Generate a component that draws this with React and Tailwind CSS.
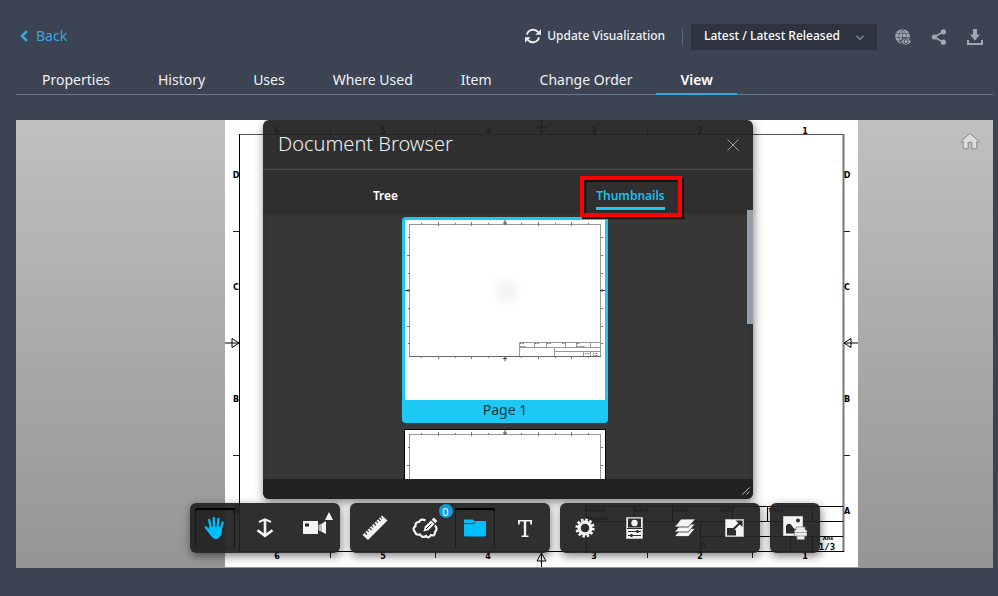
import React, { useState } from 'react';

const tabs = ['Properties', 'History', 'Uses', 'Where Used', 'Item', 'Change Order', 'View'];

const columns = [
    { label: '6', x: 52 },
    { label: '5', x: 158 },
    { label: '4', x: 263 },
    { label: '3', x: 369 },
    { label: '2', x: 475 },
    { label: '1', x: 580 },
];

const rows = [
    { label: 'D', y: 55 },
    { label: 'C', y: 167 },
    { label: 'B', y: 279 },
    { label: 'A', y: 391 },
];

const TopBar = () => (
    <header className="flex items-center justify-between pt-6 pr-[10px] pl-1">
        <a href="#back" className="flex items-center gap-2 pb-[2px] text-sm text-[#38a5dc]">
            <svg width="8" height="12" viewBox="0 0 8 12" fill="none" stroke="currentColor" strokeWidth="2.6">
                <path d="M7 1 L2 6 L7 11" />
            </svg>
            Back
        </a>

        <div className="flex items-center">
            <button className="flex items-center gap-[6px] pb-[2px] text-xs font-medium text-[#f0f1f3]">
                <svg width="16" height="16" viewBox="0 0 16 16" fill="none" stroke="currentColor" strokeWidth="2">
                    <path d="M2 6.6 A6.2 6.2 0 0 1 13 4.2" />
                    <path d="M14 9.4 A6.2 6.2 0 0 1 3 11.8" />
                    <path d="M16 1.2 V6.8 H10.4 Z" fill="currentColor" stroke="none" />
                    <path d="M0 14.8 V9.2 H5.6 Z" fill="currentColor" stroke="none" />
                </svg>
                Update Visualization
            </button>
            <span className="mr-2 ml-[17px] h-4 w-px bg-[#5f6b7a]" />
            <div className="relative">
                <select
                    aria-label="Version"
                    className="block h-[26px] w-[186px] appearance-none bg-[#2d333f] pb-[2px] pl-[13px] text-xs font-medium text-white"
                >
                    <option>Latest / Latest Released</option>
                </select>
                <svg
                    className="pointer-events-none absolute top-[11px] right-[13px] text-[#7d8998]"
                    width="8"
                    height="6"
                    viewBox="0 0 8 6"
                    fill="none"
                    stroke="currentColor"
                    strokeWidth="1.5"
                >
                    <path d="M0.5 0.8 L4 4.5 L7.5 0.8" />
                </svg>
            </div>
            <div className="ml-[18px] flex items-center gap-5 text-[#a2a8b2]">
                <button aria-label="Web view">
                    <svg width="16" height="16" viewBox="0 0 16 16">
                        <circle cx="7.5" cy="7.5" r="7.3" fill="currentColor" />
                        <path
                            d="M7.5 0 V15 M0 4.5 H15 M0 8.5 H15 M1 12 H14 M7.5 0.5 C2.5 4 2.5 11 7.5 14.5 M7.5 0.5 C12.5 4 12.5 11 7.5 14.5"
                            fill="none"
                            stroke="#3c4453"
                            strokeWidth="0.6"
                        />
                        <path d="M4.5 12.6 Q10.5 4.5 16 12.6 Q10.5 20 4.5 12.6" fill="#3c4453" />
                        <path d="M6 12.7 Q11 6.5 16 12.7 Q11 18.6 6 12.7" fill="currentColor" />
                        <circle cx="11" cy="12.6" r="2" fill="none" stroke="#3c4453" />
                    </svg>
                </button>
                <button aria-label="Share">
                    <svg width="16" height="16" viewBox="0 0 16 16" fill="currentColor">
                        <path d="M12.5 2.8 L3 8 L12.5 13.2" fill="none" stroke="currentColor" strokeWidth="1.6" />
                        <circle cx="12.4" cy="2.8" r="2.6" />
                        <circle cx="3.4" cy="8" r="2.6" />
                        <circle cx="12.4" cy="13.2" r="2.6" />
                    </svg>
                </button>
                <button aria-label="Download">
                    <svg width="16" height="16" viewBox="0 0 16 16" fill="currentColor">
                        <path d="M6 0 H10 V5.5 H13 L8 11.5 L3 5.5 H6 Z" />
                        <path d="M0 11 H2 V14 H14 V11 H16 V16 H0 Z" />
                    </svg>
                </button>
            </div>
        </div>
    </header>
);

const TabBar = () => (
    <nav className="mt-[17px] flex border-b border-[#6a7789] pl-[2px]">
        {tabs.map((tab) => (
            <a
                key={tab}
                href="#tab"
                className={
                    tab === 'View'
                        ? '-mb-px border-b-2 border-[#2fa7df] px-6 pt-[3px] pb-[3px] text-sm leading-5 font-semibold text-white'
                        : 'px-6 pt-[3px] pb-1 text-sm leading-5 text-[#f0f1f3]'
                }
            >
                {tab}
            </a>
        ))}
    </nav>
);

const Sheet = () => (
    <svg
        className="absolute top-0 left-[209px] bg-white"
        width="633"
        height="447"
        viewBox="0 0 633 447"
        fontFamily="DejaVu Sans"
        fontWeight="bold"
        fontSize="8"
        textAnchor="middle"
    >
        <path d="M14 14.5 H619" stroke="#555" fill="none" />
        <path d="M618.5 14 V432" stroke="#777" strokeWidth="2" fill="none" />
        <path d="M14.5 14 V431.5 H619" stroke="#000" fill="none" />
        {columns.map((col) => (
            <g key={col.label}>
                <text x={col.x} y="14">{col.label}</text>
                <text x={col.x} y="439">{col.label}</text>
            </g>
        ))}
        {rows.map((row) => (
            <g key={row.label}>
                <text x="11" y={row.y + 3}>{row.label}</text>
                <text x="622" y={row.y + 3}>{row.label}</text>
            </g>
        ))}
        <path
            d="M105.5 8 V14 M210.5 8 V14 M422.5 8 V14 M527.5 8 V14 M105.5 432 V438 M210.5 432 V438 M422.5 432 V438 M527.5 432 V438 M8 111.5 H14 M8 335.5 H14 M619 111.5 H625 M619 335.5 H625"
            stroke="#222"
        />
        {/* центровочные стрелки */}
        <path
            d="M316.5 0 V14 M312 7 H321 L316.5 14 Z M316.5 447 V431 M312 441 H321 L316.5 433 Z M0 223 H14 M7 218.5 V227.5 L14 223 Z M633 223 H619 M626 218.5 V227.5 L619 223 Z"
            stroke="#000"
            fill="none"
        />
        {/* основная надпись */}
        <path
            d="M361.5 431 V386.5 H618 M361 401.5 H618 M409.5 387 V401 M447.5 387 V401 M507.5 387 V401 M542.5 387 V401 M587.5 387 V401 M475.5 401 V431 M475 416.5 H618 M565.5 416 V431 M587.5 416 V431"
            stroke="#000"
            fill="none"
        />
        <g fontSize="5">
            <text x="370" y="392">DRAWN</text>
            <text x="372" y="400">pangeni</text>
            <text x="417" y="392">DATE</text>
            <text x="455" y="392">CHKD</text>
            <text x="502" y="392">DATE</text>
            <text x="551" y="392">TITLE</text>
            <text x="603" y="420">Ahs</text>
        </g>
        <text x="478" y="428" fontSize="9" fontWeight="normal">A</text>
        <text x="602" y="430" fontSize="9" fontFamily="DejaVu Sans Mono">1/3</text>
    </svg>
);

const PageDrawing = () => (
    <svg width="200" height="180" viewBox="0 0 200 180" className="block bg-white">
        <rect x="4.5" y="4.5" width="191" height="132" fill="none" stroke="#999" />
        <path d="M4 136.5 H196" stroke="#666" />
        <path
            d="M16.5 3 V5 M33.5 2 V6 M50.5 3 V5 M66.5 2 V6 M83.5 3 V5 M116.5 3 V5 M133.5 2 V6 M150.5 3 V5 M166.5 2 V6 M183.5 3 V5 M16.5 136 V138 M33.5 136 V139 M50.5 136 V138 M66.5 136 V139 M83.5 136 V138 M116.5 136 V138 M133.5 136 V139 M150.5 136 V138 M166.5 136 V139 M183.5 136 V138 M3 17.5 H5 M2 35.5 H5 M3 53.5 H5 M3 88.5 H5 M2 106.5 H5 M3 123.5 H5 M196 17.5 H198 M196 35.5 H198 M196 53.5 H198 M196 88.5 H198 M196 106.5 H198 M196 123.5 H198"
            stroke="#777"
        />
        <path
            d="M100 0 V5 M98 3 H102 M100 136 V141 M98 138.5 H102 M0 70.5 H5 M3 69 V72 M195 70.5 H200 M197 69 V72"
            stroke="#444"
        />
        <path
            d="M114.5 136 V122.5 H196 M114 127.5 H196 M129.5 122 V127 M141.5 122 V127 M160.5 122 V127 M171.5 122 V127 M185.5 122 V127 M149.5 127 V136 M150 131.5 H196 M178.5 131 V136 M185.5 131 V136"
            stroke="#999"
            fill="none"
        />
        <path
            d="M115 123.5 H119 M115 126.5 H121 M130 123.5 H134 M142 123.5 H146 M157 123.5 H160 M172 123.5 H175 M172 126.5 H180 M180 133.5 H184 M188 133.5 H192 M188 135.5 H193"
            stroke="#777"
            strokeDasharray="1 0.5"
        />
    </svg>
);

const DocumentBrowser = () => {
    const [selected, setSelected] = useState(1);

    return (
        <section className="absolute top-0 left-[247px] w-[490px] overflow-hidden rounded-md bg-[#222222]/94 shadow-[1px_3px_10px_rgba(0,0,0,0.5)]">
            <div className="flex h-[50px] items-center justify-between border-b border-[#465059] pr-[14px] pl-[15px]">
                <h2 className="pb-[2px] text-xl leading-none font-light text-[#f0f0f0]">Document Browser</h2>
                <button aria-label="Close">
                    <svg width="12" height="12" viewBox="0 0 12 12" stroke="#9a9fa6">
                        <path d="M0.5 0.5 L11.5 11.5 M11.5 0.5 L0.5 11.5" />
                    </svg>
                </button>
            </div>

            <div className="flex h-10 text-xs font-semibold">
                <div className="flex flex-1 justify-center pt-[15px]">
                    <button className="h-[25px] border-b-[3px] border-transparent text-white">Tree</button>
                </div>
                <div className="relative flex flex-1 justify-center pt-[15px]">
                    <button className="h-[25px] border-b-[3px] border-[#1ec8f5] text-[#1cbfe9]">Thumbnails</button>
                    <div className="pointer-events-none absolute top-[6px] left-[72px] z-10 h-[41px] w-[102px] border-4 border-[#fe0000] shadow-[2px_2px_0_#111,inset_2px_2px_0_#111]" />
                </div>
            </div>

            <div className="relative flex h-[269px] flex-col items-center overflow-hidden bg-[#373737] pt-[7px] pr-[6px] shadow-[inset_0_4px_6px_-2px_rgba(0,0,0,0.3)]">
                <button
                    onClick={() => setSelected(1)}
                    className="relative w-[206px] shrink-0 rounded border-[3px] border-[#1ec8f5] bg-[#1ec8f5] text-sm leading-5 text-[#16323c]"
                    aria-pressed={selected === 1}
                >
                    <PageDrawing />
                    <span className="absolute top-[61px] left-[91px] size-5 rounded-md bg-[#f3f3f3] blur-xs" />
                    Page 1
                </button>
                <button
                    onClick={() => setSelected(2)}
                    className="mt-[6px] shrink-0 border border-black"
                    aria-pressed={selected === 2}
                    aria-label="Page 2"
                >
                    <PageDrawing />
                </button>
                <div className="absolute top-0 right-0 h-[114px] w-[6px] bg-[#969fa9]" />
            </div>

            <div className="flex h-5 items-end justify-end bg-[#222222] pr-[3px] pb-1">
                <svg width="8" height="8" viewBox="0 0 8 8" stroke="#b8bcc2">
                    <path d="M0.5 7.5 L7.5 0.5 M4.5 7.5 L7.5 4.5" />
                </svg>
            </div>
        </section>
    );
};

const HandIcon = () => (
    <svg width="22" height="24" viewBox="0 0 22 24" fill="none" stroke="#00bfff" strokeLinecap="round">
        <path d="M7 13 L5.2 4 M10 12 L9.8 2 M13.5 12 L14.4 3 M16.3 14 L18.7 6.5" strokeWidth="2.3" />
        <path d="M7.5 18 L2 11.5" strokeWidth="2.6" />
        <path d="M6 11 L17.5 11.5 L17 18 Q15.5 22.5 12 22.5 Q9 22.5 7.5 20 L4 15 Z" fill="#00bfff" strokeWidth="1" />
    </svg>
);

const ZoomIcon = () => (
    <svg width="18" height="20" viewBox="0 0 18 20" fill="none" stroke="#f4f4f4">
        <path d="M9 1 V18" strokeWidth="2.6" />
        <path d="M3 4 L9 1.4 L15 4" strokeWidth="2" />
        <path d="M1.5 12.3 L9 17.8 L16.5 12.3" strokeWidth="2.6" />
    </svg>
);

const CameraIcon = () => (
    <svg width="24" height="14" viewBox="0 0 24 14">
        <path d="M0 0 H15 V13 H0 Z" fill="#f4f4f4" />
        <path d="M2 2.5 H6 V5.5 H2 Z" fill="#222" />
        <path d="M15.5 4 L19 2.5 V11 L15.5 9.5 Z" fill="#bbb" />
        <path d="M19 2.5 L23 0 V13 L19 11 Z" fill="#f4f4f4" />
    </svg>
);

const RulerIcon = () => (
    <svg width="26" height="26" viewBox="0 0 26 26">
        <path d="M0.5 20 L20 0.5 L25.5 5.5 L6 25 Z" fill="#f4f4f4" />
        <path
            d="M3 17.5 L5 19.5 M5.3 15.3 L6.8 16.8 M7.5 13 L9.5 15 M9.8 10.8 L11.3 12.3 M12 8.5 L14 10.5 M14.3 6.3 L15.8 7.8 M16.5 4 L18.5 6 M18.5 2.2 L20 3.7"
            stroke="#2f2f2f"
            strokeWidth="1.1"
        />
    </svg>
);

const MarkupIcon = () => (
    <svg width="26" height="24" viewBox="0 0 26 24" fill="none" stroke="#f4f4f4" strokeWidth="2.2">
        <path d="M13.5 4.5 Q9 2 7 6 Q3 6 3.5 10 Q0 12.5 3 16 Q4 19.5 8 18.5 Q10.5 22.5 14 20 Q16.5 23 19 19 Q23 20.5 23 16 Q26 13 23 9.5" />
        <path d="M11.5 15.5 L12.8 10.5 L19 4.5 L22.5 8 L16.3 14.2 Z" fill="#f4f4f4" stroke="none" />
        <path d="M19.8 3.7 L22 1.6 L25.3 5 L23.2 7.2 Z" fill="#f4f4f4" stroke="none" />
        <path d="M14 13 L19.5 7.5" stroke="#2f2f2f" strokeWidth="1" />
    </svg>
);

const FolderIcon = () => (
    <svg width="22" height="18" viewBox="0 0 22 18" fill="#00bfff">
        <path d="M0 1.5 Q0 0.5 1 0.5 H9 L10.5 2 H21 Q22 2 22 3 V16 Q22 17.5 20.5 17.5 H1.5 Q0 17.5 0 16 Z" />
        <path d="M0 4.6 H9.5 L11 2.8" stroke="#252525" fill="none" />
    </svg>
);

const TextIcon = () => (
    <svg width="14" height="17" viewBox="0 0 14 17" fill="#f4f4f4">
        <path d="M0 0 H14 V4.5 H12.4 L12 1.6 H8.2 V15.4 H10.5 V17 H3.5 V15.4 H5.8 V1.6 H2 L1.6 4.5 H0 Z" />
    </svg>
);

const GearIcon = () => (
    <svg width="20" height="20" viewBox="0 0 20 20" fill="none" stroke="#f4f4f4">
        <circle cx="10" cy="10" r="5.9" strokeWidth="3.2" />
        <circle cx="10" cy="10" r="8.3" strokeWidth="2.6" strokeDasharray="2.5 1.846" />
    </svg>
);

const PropertiesIcon = () => (
    <svg width="18" height="22" viewBox="0 0 18 22">
        <path d="M0.5 0.5 H16.5 V21.5 H0.5 Z" fill="#f4f4f4" stroke="#bbb" />
        <path d="M2 1.5 H15 V10.5 H2 Z" fill="#2b2b2b" />
        <circle cx="8.5" cy="6" r="3.2" fill="#f4f4f4" />
        <path d="M1 11.5 H16 M2 14.5 H15 M2 18.5 H15" stroke="#2b2b2b" />
        <path d="M11.5 13 V16 M5.5 17 V20" stroke="#2b2b2b" strokeWidth="2" />
    </svg>
);

const LayersIcon = () => (
    <svg width="22" height="20" viewBox="0 0 22 20">
        <path d="M7 10.5 H21 L14.5 18.5 H0.5 Z" fill="#f4f4f4" stroke="#2f2f2f" strokeWidth="0.8" />
        <path d="M7 6 H21 L14.5 14 H0.5 Z" fill="#f4f4f4" stroke="#2f2f2f" strokeWidth="0.8" />
        <path d="M7 1 H21.5 L14.5 9 H0.5 Z" fill="#f4f4f4" stroke="#2f2f2f" strokeWidth="0.8" />
    </svg>
);

const FullscreenIcon = () => (
    <svg width="20" height="18" viewBox="0 0 20 18">
        <path d="M0.5 0.5 H18.5 V17.5 H0.5 Z" fill="#f4f4f4" stroke="#bbb" />
        <path d="M2 9 H8.5 L11 11.5 V16.5 H2 Z" fill="#2b2b2b" />
        <path d="M10.5 1.5 H17.5 V8 Z" fill="#2b2b2b" />
        <path d="M8 10.5 L15.5 3.5" stroke="#2b2b2b" strokeWidth="2" />
    </svg>
);

const PrintIcon = () => (
    <svg width="24" height="24" viewBox="0 0 24 24">
        <path d="M0.5 0.5 H19.5 V19.5 H0.5 Z" fill="#f4f4f4" stroke="#ccc" />
        <path d="M3 17.5 V10 Q5 6.5 8 8.5 Q10 12 13 13.5 L13 17.5 Z" fill="#2b2b2b" />
        <circle cx="15" cy="4.5" r="2" fill="#2b2b2b" />
        <path d="M13 11 H22 V14 H24 V20 H21.5 V23.5 H14 V20 H11.5 V14 H13 Z" fill="#eee" stroke="#888" strokeWidth="0.8" />
        <path d="M12 16.5 H24 M14 20 H21.5" stroke="#aaa" />
    </svg>
);

const toolGroups = [
    [
        { name: 'Pan', Icon: HandIcon, active: true },
        { name: 'Zoom', Icon: ZoomIcon },
        { name: 'Camera', Icon: CameraIcon, arrow: true },
    ],
    [
        { name: 'Measure', Icon: RulerIcon },
        { name: 'Markup', Icon: MarkupIcon, badge: '0' },
        { name: 'Document Browser', Icon: FolderIcon, active: true },
        { name: 'Text', Icon: TextIcon },
    ],
    [
        { name: 'Settings', Icon: GearIcon },
        { name: 'Properties', Icon: PropertiesIcon },
        { name: 'Layers', Icon: LayersIcon },
        { name: 'Full screen', Icon: FullscreenIcon },
    ],
    [{ name: 'Print', Icon: PrintIcon }],
];

const ToolButton = ({ name, Icon, active, arrow, badge }) => (
    <button
        aria-label={name}
        className={
            active
                ? 'relative m-[5px] flex size-10 items-center justify-center rounded-xs shadow-[inset_0_2px_1px_#000,inset_1px_0_1px_#1c1c1c,inset_-1px_0_1px_#1c1c1c]'
                : 'relative m-[5px] flex size-10 items-center justify-center'
        }
    >
        <Icon />
        {arrow && (
            <svg className="absolute top-1 right-[2px]" width="8" height="8" viewBox="0 0 8 8" fill="#f4f4f4">
                <path d="M4 0 L8 8 H0 Z" />
            </svg>
        )}
        {badge && (
            <span className="absolute -top-1 -right-2 flex size-[14px] items-center justify-center rounded-full bg-[#0d9ddb] text-[11px] leading-none text-white">
                {badge}
            </span>
        )}
    </button>
);

const Toolbar = () => (
    <div className="absolute right-0 bottom-[15px] left-0 flex justify-center gap-[10px]">
        {toolGroups.map((group) => (
            <div
                key={group[0].name}
                className="flex rounded-md bg-[#222222]/94 shadow-[1px_3px_10px_rgba(0,0,0,0.5)]"
            >
                {group.map((tool) => (
                    <ToolButton key={tool.name} {...tool} />
                ))}
            </div>
        ))}
    </div>
);

export default function App() {
    return (
        <div className="min-h-screen bg-[#3c4453] pr-[5px] pb-7 pl-4 font-['Noto_Sans',sans-serif]">
            <TopBar />
            <TabBar />
            <main className="relative mt-[25px] h-[448px] overflow-hidden bg-linear-to-b from-[#c0c0c0] to-[#959595]">
                <Sheet />
                <button aria-label="Home" className="absolute top-3 right-[13px]">
                    <svg width="20" height="18" viewBox="0 0 22 19" fill="#ddd" stroke="#808080">
                        <path d="M1 10 L11 1 L21 10 L19.5 11 L18.5 10 V18 H13 V11 H9 V18 H3.5 V10 L2.5 11 Z" />
                    </svg>
                </button>
                <DocumentBrowser />
                <Toolbar />
            </main>
        </div>
    );
}
